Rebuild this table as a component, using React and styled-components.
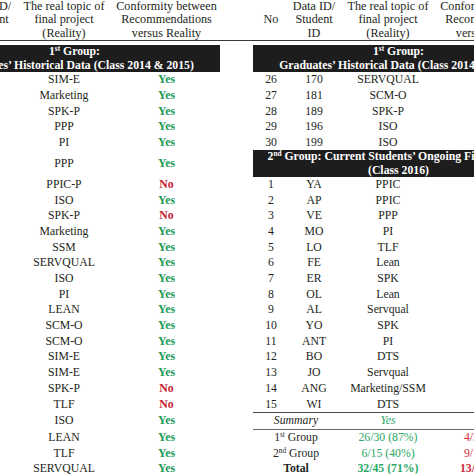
import React from "react";
import styled, { createGlobalStyle } from "styled-components";

const GlobalStyle = createGlobalStyle`
  body {
    margin: 0;
    background: #fff;
    overflow: hidden;
  }
`;

const widths = [36, 50, 98, 107, 33, 36, 50, 98, 107];

const leftTop = [
  ["SIM-E", "Yes"],
  ["Marketing", "Yes"],
  ["SPK-P", "Yes"],
  ["PPP", "Yes"],
  ["PI", "Yes"],
];

const rightTop = [
  [26, 170, "SERVQUAL"],
  [27, 181, "SCM-O"],
  [28, 189, "SPK-P"],
  [29, 196, "ISO"],
  [30, 199, "ISO"],
];

const leftBottom = [
  ["PPIC-P", "No"],
  ["ISO", "Yes"],
  ["SPK-P", "No"],
  ["Marketing", "Yes"],
  ["SSM", "Yes"],
  ["SERVQUAL", "Yes"],
  ["ISO", "Yes"],
  ["PI", "Yes"],
  ["LEAN", "Yes"],
  ["SCM-O", "Yes"],
  ["SCM-O", "Yes"],
  ["SIM-E", "Yes"],
  ["SIM-E", "Yes"],
  ["SPK-P", "No"],
  ["TLF", "No"],
  ["ISO", "Yes"],
  ["LEAN", "Yes"],
  ["TLF", "Yes"],
  ["SERVQUAL", "Yes"],
];

const rightBottom = [
  [1, "YA", "PPIC", "Yes"],
  [2, "AP", "PPIC", "No"],
  [3, "VE", "PPP", "Yes"],
  [4, "MO", "PI", "No"],
  [5, "LO", "TLF", "No"],
  [6, "FE", "Lean", "Yes"],
  [7, "ER", "SPK", "No"],
  [8, "OL", "Lean", "No"],
  [9, "AL", "Servqual", "Yes"],
  [10, "YO", "SPK", "No"],
  [11, "ANT", "PI", "No"],
  [12, "BO", "DTS", "Yes"],
  [13, "JO", "Servqual", "No"],
  [14, "ANG", "Marketing/SSM", "No"],
  [15, "WI", "DTS", "Yes"],
];

const Page = styled.div`
  width: 474px;
  height: 474px;
  overflow: hidden;
`;

const Table = styled.table`
  margin-left: -71px;
  width: 615px;
  table-layout: fixed;
  border-collapse: separate;
  border-spacing: 0;
  font-family: "Liberation Serif", "Times New Roman", serif;
  font-size: 11.75px;
  color: #231f20;
`;

const HeadCell = styled.th`
  padding: 0;
  font-weight: normal;
  font-size: 12.2px;
  line-height: 13.3px;
  text-align: center;
  vertical-align: middle;
  white-space: nowrap;
  border-bottom: 1.5px solid #3a3a3a;
`;

const Cell = styled.td`
  padding: 0;
  height: ${(p) => p.$h || 15.6}px;
  line-height: 15.6px;
  text-align: center;
  vertical-align: middle;
  white-space: nowrap;
  font-style: ${(p) => (p.$italic ? "italic" : "normal")};
  font-weight: ${(p) => (p.$bold ? "bold" : "normal")};
  color: ${(p) =>
    p.$tone === "green" ? "#2aa766" : p.$tone === "red" ? "#cf2a3c" : "inherit"};
  border-top: ${(p) => (p.$lineTop ? "1.3px solid #4a4a4a" : "none")};
  border-bottom: ${(p) => (p.$lineBottom ? "1px solid #6a6a6a" : "none")};
`;

const BandCell = styled.td`
  padding: ${(p) => p.$gap || 0}px 0 0;
  vertical-align: top;
`;

const Band = styled.div`
  background: #1d1d1d;
  color: #fff;
  font-weight: bold;
  line-height: ${(p) => p.$lh}px;
  text-align: center;
  white-space: nowrap;
`;

const Sup = styled.sup`
  font-size: 0.62em;
  line-height: 0;
  vertical-align: 0.55em;
`;

const Verdict = styled.span`
  font-weight: bold;
  color: ${(p) => (p.$yes ? "#1b9a59" : "#c4182f")};
`;

const Gap = styled.td`
  padding: 0;
`;

const Header = () => (
  <>
    <HeadCell>No</HeadCell>
    <HeadCell>
      Data ID/
      <br />
      Student
      <br />
      ID
    </HeadCell>
    <HeadCell>
      The real topic of
      <br />
      final project
      <br />
      (Reality)
    </HeadCell>
    <HeadCell>
      Conformity between
      <br />
      Recommendations
      <br />
      versus Reality
    </HeadCell>
  </>
);

const FirstBand = () => (
  <Band $lh={13.5}>
    1<Sup>st</Sup> Group:
    <br />
    Graduates’ Historical Data (Class 2014 &amp; 2015)
  </Band>
);

const LeftCells = ({ no, topic, verdict, h }) => (
  <>
    <Cell $h={h}>{no}</Cell>
    <Cell $h={h}>{100 + no * 3}</Cell>
    <Cell $h={h}>{topic}</Cell>
    <Cell $h={h}>
      <Verdict $yes={verdict === "Yes"}>{verdict}</Verdict>
    </Cell>
  </>
);

const summary = [
  { label: "Summary", yes: "Yes", no: "No", italic: true, top: true },
  { label: <>1<Sup>st</Sup> Group</>, yes: "26/30 (87%)", no: "4/30 (13%)" },
  { label: <>2<Sup>nd</Sup> Group</>, yes: "6/15 (40%)", no: "9/15 (60%)" },
  { label: "Total", yes: "32/45 (71%)", no: "13/45 (29%)", bold: true },
];

const App = () => {
  return (
    <Page>
      <GlobalStyle />
      <Table>
        <colgroup>
          {widths.map((w, i) => (
            <col key={i} style={{ width: w }} />
          ))}
        </colgroup>
        <thead>
          <tr>
            <Header />
            <HeadCell />
            <Header />
          </tr>
        </thead>
        <tbody>
          <tr>
            <BandCell colSpan={4} $gap={4.5}>
              <FirstBand />
            </BandCell>
            <Gap />
            <BandCell colSpan={4} $gap={4.5}>
              <FirstBand />
            </BandCell>
          </tr>
          {leftTop.map(([topic, verdict], i) => (
            <tr key={"t" + i}>
              <LeftCells no={i + 1} topic={topic} verdict={verdict} />
              <Gap />
              <Cell>{rightTop[i][0]}</Cell>
              <Cell>{rightTop[i][1]}</Cell>
              <Cell>{rightTop[i][2]}</Cell>
              <Cell>
                <Verdict $yes>Yes</Verdict>
              </Cell>
            </tr>
          ))}
          <tr>
            <LeftCells no={6} topic="PPP" verdict="Yes" h={26.5} />
            <Gap />
            <BandCell colSpan={4}>
              <Band $lh={13.25}>
                2<Sup>nd</Sup> Group: Current Students’ Ongoing Final Project
                <br />
                (Class 2016)
              </Band>
            </BandCell>
          </tr>
          {leftBottom.map(([topic, verdict], i) => {
            const r = rightBottom[i];
            const s = summary[i - rightBottom.length];
            return (
              <tr key={"b" + i}>
                <LeftCells no={i + 7} topic={topic} verdict={verdict} h={15.7} />
                <Gap />
                {r ? (
                  <>
                    <Cell $h={15.7}>{r[0]}</Cell>
                    <Cell $h={15.7}>{r[1]}</Cell>
                    <Cell $h={15.7}>{r[2]}</Cell>
                    <Cell $h={15.7}>
                      <Verdict $yes={r[3] === "Yes"}>{r[3]}</Verdict>
                    </Cell>
                  </>
                ) : (
                  <>
                    <Cell
                      colSpan={2}
                      $italic={s.italic}
                      $bold={s.bold}
                      $lineTop={s.top}
                      $lineBottom={s.top}
                    >
                      {s.label}
                    </Cell>
                    <Cell
                      $tone="green"
                      $italic={s.italic}
                      $bold={s.bold}
                      $lineTop={s.top}
                      $lineBottom={s.top}
                    >
                      {s.yes}
                    </Cell>
                    <Cell
                      $tone="red"
                      $italic={s.italic}
                      $bold={s.bold}
                      $lineTop={s.top}
                      $lineBottom={s.top}
                    >
                      {s.no}
                    </Cell>
                  </>
                )}
              </tr>
            );
          })}
        </tbody>
      </Table>
    </Page>
  );
};

export default App;
